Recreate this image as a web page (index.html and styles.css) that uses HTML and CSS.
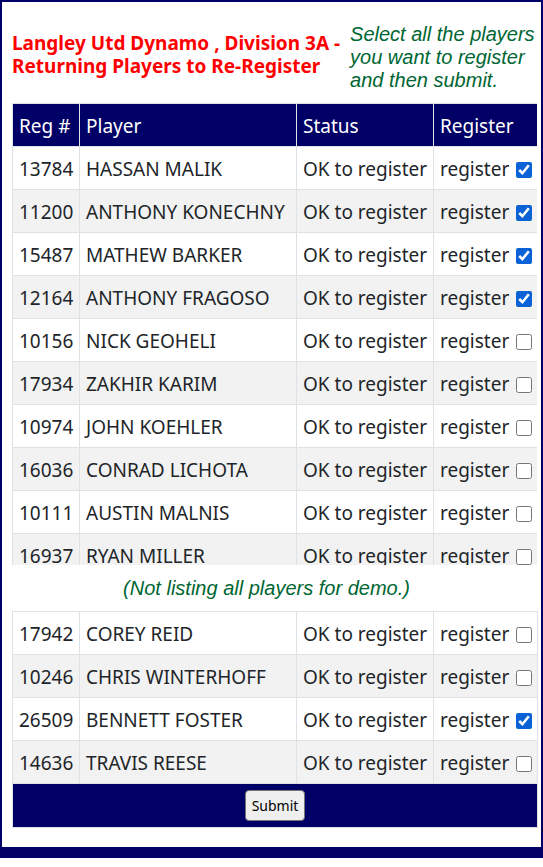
FILE: index.html
```html
<!DOCTYPE html>
<html>
<head>
  <title>Re-Register Players</title>
  <meta charset="utf-8">
  <link rel="stylesheet" href="styles.css">
</head>
<body>

  <div class="page">
    <div class="top">
      <h2 class="team-title">Langley Utd Dynamo , Division 3A - Returning Players to Re-Register</h2>
      <p class="hint">Select all the players you want to register and then submit.</p>
    </div>

    <form method="POST" action="/register">
      <!-- first block of players, clipped -->
      <div class="list-box">
        <table class="players">
          <colgroup>
            <col class="col-reg"><col class="col-name"><col class="col-status"><col class="col-check">
          </colgroup>
          <thead>
            <tr><th>Reg #</th><th>Player</th><th>Status</th><th>Register</th></tr>
          </thead>
          <tbody>
            <tr><td>13784</td><td>HASSAN MALIK</td><td>OK to register</td><td>register <input type="checkbox" checked></td></tr>
            <tr><td>11200</td><td>ANTHONY KONECHNY</td><td>OK to register</td><td>register <input type="checkbox" checked></td></tr>
            <tr><td>15487</td><td>MATHEW BARKER</td><td>OK to register</td><td>register <input type="checkbox" checked></td></tr>
            <tr><td>12164</td><td>ANTHONY FRAGOSO</td><td>OK to register</td><td>register <input type="checkbox" checked></td></tr>
            <tr><td>10156</td><td>NICK GEOHELI</td><td>OK to register</td><td>register <input type="checkbox"></td></tr>
            <tr><td>17934</td><td>ZAKHIR KARIM</td><td>OK to register</td><td>register <input type="checkbox"></td></tr>
            <tr><td>10974</td><td>JOHN KOEHLER</td><td>OK to register</td><td>register <input type="checkbox"></td></tr>
            <tr><td>16036</td><td>CONRAD LICHOTA</td><td>OK to register</td><td>register <input type="checkbox"></td></tr>
            <tr><td>10111</td><td>AUSTIN MALNIS</td><td>OK to register</td><td>register <input type="checkbox"></td></tr>
            <tr><td>16937</td><td>RYAN MILLER</td><td>OK to register</td><td>register <input type="checkbox"></td></tr>
          </tbody>
        </table>
      </div>

      <p class="note">(Not listing all players for demo.)</p>

      <table class="players">
        <colgroup>
          <col class="col-reg"><col class="col-name"><col class="col-status"><col class="col-check">
        </colgroup>
        <tbody>
          <tr><td>17942</td><td>COREY REID</td><td>OK to register</td><td>register <input type="checkbox"></td></tr>
          <tr><td>10246</td><td>CHRIS WINTERHOFF</td><td>OK to register</td><td>register <input type="checkbox"></td></tr>
          <tr><td>26509</td><td>BENNETT FOSTER</td><td>OK to register</td><td>register <input type="checkbox" checked></td></tr>
          <tr><td>14636</td><td>TRAVIS REESE</td><td>OK to register</td><td>register <input type="checkbox"></td></tr>
        </tbody>
        <tfoot>
          <tr><td colspan="4"><input type="submit" value="Submit" class="submit-btn"></td></tr>
        </tfoot>
      </table>
    </form>
  </div>

  <div class="bottom-bar"></div>

</body>
</html>
```

FILE: styles.css
```css
/* General Page Styling */
body {
  font-family: "Noto Sans", "Open Sans", sans-serif;
  background-color: #fff;
  color: #212529;
  margin: 0;
}

.page {
  border: 2px solid #000066;
  border-bottom: none;
  padding: 0 4px 0 10px;
  height: 845px;
}

.bottom-bar {
  background-color: #000066;
  height: 11px;
}

/* Title Area */
.top {
  display: flex;
  align-items: center;
  justify-content: space-between;
  padding: 21px 0 11px;
}

.team-title {
  color: #ff0000;
  font-size: 19px;
  line-height: 23px;
  font-weight: bold;
  margin: 0 0 5px;
  width: 340px;
}

.hint {
  color: #006633;
  font-family: "Liberation Sans", Arial, sans-serif;
  font-style: italic;
  font-size: 20px;
  line-height: 23px;
  margin: 0;
  width: 188px;
}

/* Table Styling */
.list-box {
  height: 462px;
  overflow: hidden;
}

.players {
  width: 100%;
  table-layout: fixed;
  border-collapse: collapse;
  border: 1px solid #dee2e6;
  font-size: 19px;
  line-height: 30px;
}

.col-reg { width: 67px; }
.col-name { width: 217px; }
.col-status { width: 137px; }
.col-check { width: 104px; }

.players th,
.players td {
  border: 1px solid #dee2e6;
  padding: 7px 6px 5px;
  text-align: left;
  font-weight: normal;
  white-space: nowrap;
  overflow: hidden;
}

.players th {
  background-color: #000066;
  color: #fff;
}

.players tbody tr:nth-child(even) td {
  background-color: #f2f2f2;
}

.players input[type="checkbox"] {
  width: 16px;
  height: 16px;
  margin: 0 0 0 2px;
  vertical-align: -2px;
  accent-color: #0b62d6;
}

.players tfoot td {
  background-color: #000066;
  text-align: center;
  line-height: 20px;
  padding: 6px;
}

.submit-btn {
  font-family: "Noto Sans", sans-serif;
  font-size: 14px;
  padding: 5px 6px;
  border: 1px solid #767676;
  border-radius: 4px;
  background-color: #efefef;
  color: #000;
}

/* Note between tables */
.note {
  color: #006633;
  font-family: "Liberation Sans", Arial, sans-serif;
  font-style: italic;
  font-size: 20px;
  line-height: 24px;
  text-align: center;
  margin: 11px 0;
  padding-right: 16px;
}
```
